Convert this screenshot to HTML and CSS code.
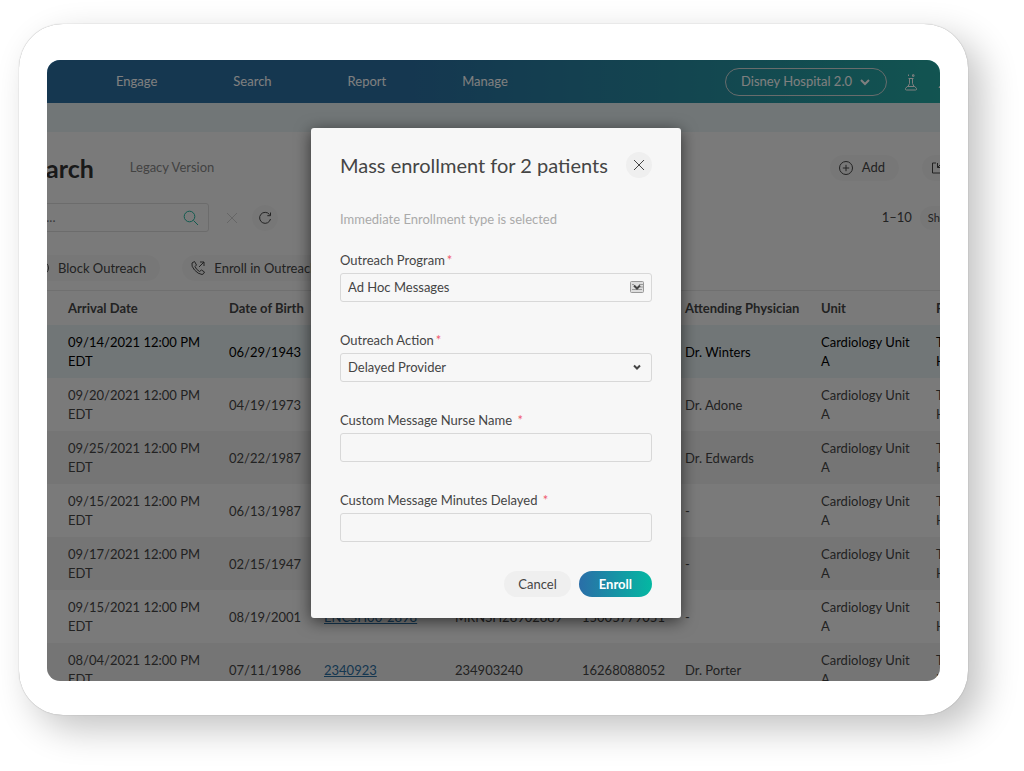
FILE: index.html
```html
<!DOCTYPE html>
<html lang="en">
<head>
    <meta charset="UTF-8">
    <meta name="viewport" content="width=device-width, initial-scale=1.0">
    <title>Patient search</title>
    <link rel="stylesheet" href="styles.css">
</head>
<body>
    <div class="tablet">
        <div class="screen">
            <div class="app">
                <header class="topbar">
                    <nav class="menu">
                        <a href="#">Engage</a>
                        <a href="#">Search</a>
                        <a href="#">Report</a>
                        <a href="#">Manage</a>
                    </nav>
                    <button class="hospital">Disney Hospital 2.0
                        <svg width="12" height="12" viewBox="0 0 12 12"><path d="M2 4l4 4 4-4"/></svg>
                    </button>
                    <button class="bar-icon" aria-label="Lab">
                        <svg width="14" height="18" viewBox="0 0 14 18"><path d="M4.500 5.500h5M5.500 5.500v5L4 13.500M8.500 5.500v5l1.500 3M3.200 13.500h7.600l1.700 2q.5 1.500-1 1.500H2.500q-1.500 0-1-1.500zM4.500 1.500v1.500M8.500 1.800h1.500v1.500H8.500z"/></svg>
                    </button>
                    <button class="bar-icon" aria-label="Alerts">
                        <svg width="18" height="18" viewBox="0 0 18 18"><path d="M1 14.500h16M1 14.500q2-1 2-5.500 0-6 6-6t6 6q0 4.500 2 5.500"/></svg>
                    </button>
                </header>
                <div class="band"></div>

                <div class="title-row">
                    <h1>Search</h1>
                    <a class="legacy" href="#">Legacy Version</a>
                    <button class="pill add">
                        <svg width="16" height="16" viewBox="0 0 16 16"><circle cx="8" cy="8" r="6.500"/><path d="M8 4.800v6.400M4.800 8h6.400"/></svg>
                        Add
                    </button>
                    <button class="pill export" aria-label="Export">
                        <svg width="16" height="16" viewBox="0 0 16 16"><path d="M6 3H2.500v10h10v-3M7.500 3v4.500h4M7.500 7.500l5-5"/></svg>
                    </button>
                </div>

                <div class="search-row">
                    <div class="search-box">
                        <input type="text" placeholder="Search patients by..." aria-label="Search patients">
                        <svg width="16" height="16" viewBox="0 0 16 16"><circle cx="6.500" cy="6.500" r="5.300"/><path d="M10.500 10.500l4.500 4.500"/></svg>
                    </div>
                    <button class="round clear" aria-label="Clear">
                        <svg width="12" height="12" viewBox="0 0 12 12"><path d="M1 1l10 10M11 1L1 11"/></svg>
                    </button>
                    <button class="round refresh" aria-label="Refresh">
                        <svg width="14" height="14" viewBox="0 0 14 14"><path d="M11.500 3.500A5.500 5.500 0 1 0 12.500 8M12.500 1.500v3.200H9.300"/></svg>
                    </button>
                    <span class="range">1–10</span>
                    <button class="show">Show 10</button>
                </div>

                <div class="action-row">
                    <button class="pill">
                        <svg width="16" height="16" viewBox="0 0 16 16"><circle cx="8" cy="8" r="6.500"/><path d="M3.500 3.500l9 9"/></svg>
                        Block Outreach
                    </button>
                    <button class="pill">
                        <svg width="16" height="16" viewBox="0 0 16 16"><path d="M4.500 1.500L2 3q-1 3 2.500 7t7.500 4.500q1.500 0 2.500-2.500l-3-2-2 1.500Q6 9.500 5 6.500l1.500-1.500zM9 7l5-5M10 2h4v4"/></svg>
                        Enroll in Outreach
                    </button>
                </div>

                <table class="patients">
                    <colgroup>
                        <col class="c-arrival"><col class="c-birth"><col class="c-visit"><col class="c-mrn"><col class="c-phone"><col class="c-doctor"><col class="c-unit"><col class="c-facility">
                    </colgroup>
                    <thead>
                        <tr><th>Arrival Date</th><th>Date of Birth</th><th>Visit</th><th>MRN</th><th>Phone</th><th>Attending Physician</th><th>Unit</th><th>Facility</th></tr>
                    </thead>
                    <tbody>
                        <tr class="selected"><td>09/14/2021 12:00 PM EDT</td><td>06/29/1943</td><td></td><td></td><td></td><td>Dr. Winters</td><td>Cardiology Unit A</td><td>The Hospital</td></tr>
                        <tr><td>09/20/2021 12:00 PM EDT</td><td>04/19/1973</td><td></td><td></td><td></td><td>Dr. Adone</td><td>Cardiology Unit A</td><td>The Hospital</td></tr>
                        <tr><td>09/25/2021 12:00 PM EDT</td><td>02/22/1987</td><td></td><td></td><td></td><td>Dr. Edwards</td><td>Cardiology Unit A</td><td>The Hospital</td></tr>
                        <tr><td>09/15/2021 12:00 PM EDT</td><td>06/13/1987</td><td></td><td></td><td></td><td>-</td><td>Cardiology Unit A</td><td>The Hospital</td></tr>
                        <tr><td>09/17/2021 12:00 PM EDT</td><td>02/15/1947</td><td></td><td></td><td></td><td>-</td><td>Cardiology Unit A</td><td>The Hospital</td></tr>
                        <tr><td>09/15/2021 12:00 PM EDT</td><td>08/19/2001</td><td><a href="#">ENCSH00-2898</a></td><td>MRNSH28902889</td><td>15005779051</td><td>-</td><td>Cardiology Unit A</td><td>The Hospital</td></tr>
                        <tr><td>08/04/2021 12:00 PM EDT</td><td>07/11/1986</td><td><a href="#">2340923</a></td><td>234903240</td><td>16268088052</td><td>Dr. Porter</td><td>Cardiology Unit A</td><td>The Hospital</td></tr>
                    </tbody>
                </table>
            </div>

            <div class="overlay">
                <form class="modal">
                    <div class="modal-head">
                        <h2>Mass enrollment for 2 patients</h2>
                        <button type="button" class="close" aria-label="Close">
                            <svg width="12" height="12" viewBox="0 0 12 12"><path d="M1 1l10 10M11 1L1 11"/></svg>
                        </button>
                    </div>
                    <p class="note">Immediate Enrollment type is selected</p>

                    <div class="field">
                        <label for="program">Outreach Program<span class="req">*</span></label>
                        <div class="select">
                            <select id="program"><option>Ad Hoc Messages</option></select>
                            <svg class="autofill" width="16" height="14" viewBox="0 0 16 14"><rect x="1.500" y="1.500" width="13" height="11" rx="1"/><path class="lines" d="M3 4.500h2M10 4.500h4M11 7h3M3 9.500h10"/><path class="arrow" d="M5 5.500l3 3 3-3"/></svg>
                        </div>
                    </div>
                    <div class="field">
                        <label for="action">Outreach Action<span class="req">*</span></label>
                        <div class="select">
                            <select id="action"><option>Delayed Provider</option></select>
                            <svg width="16" height="14" viewBox="0 0 16 14"><path class="arrow" d="M5 5.500l3 3 3-3"/></svg>
                        </div>
                    </div>
                    <div class="field">
                        <label for="nurse">Custom Message Nurse Name <span class="req">*</span></label>
                        <input type="text" id="nurse">
                    </div>
                    <div class="field">
                        <label for="minutes">Custom Message Minutes Delayed <span class="req">*</span></label>
                        <input type="text" id="minutes">
                    </div>

                    <div class="modal-foot">
                        <button type="button" class="cancel">Cancel</button>
                        <button type="button" class="enroll">Enroll</button>
                    </div>
                </form>
            </div>
        </div>
    </div>
</body>
</html>
```
FILE: styles.css
```css
* {
    box-sizing: border-box;
}

body {
    margin: 0;
    height: 100vh;
    padding: 24px 56px 56px 19px;
    background-color: #ffffff;
    color: #454545;
    font-family: Lato, sans-serif;
    font-size: 13px;
    line-height: 19px;
}

button,
input,
select {
    font: inherit;
    color: inherit;
}

button {
    border: none;
    background: none;
    padding: 0;
    cursor: pointer;
}

svg {
    display: block;
    flex: none;
    fill: none;
    stroke: currentColor;
    stroke-width: 1;
}

.tablet {
    height: 100%;
    padding: 36px 28px 34px;
    border-radius: 44px;
    background-color: #ffffff;
    box-shadow: 0 0 1px rgba(0, 0, 0, 0.4), 14px 14px 36px rgba(0, 0, 0, 0.24);
}

.screen {
    position: relative;
    height: 100%;
    overflow: hidden;
    border-radius: 13px;
    background-color: #f5f5f5;
}

/* top bar */
.topbar {
    display: flex;
    align-items: center;
    height: 43px;
    padding-left: 69px;
    background: linear-gradient(to right, #2a6ea0 40%, #24a8a2);
    color: #ffffff;
}

.menu {
    display: flex;
    flex: 1;
    gap: 76px;
}

.menu a {
    color: inherit;
    text-decoration: none;
}

.hospital {
    display: flex;
    align-items: center;
    gap: 7px;
    height: 28px;
    padding: 0 15px;
    border: 1px solid #d0d8d8;
    border-radius: 14px;
}

.hospital svg {
    stroke-width: 2;
}

.bar-icon {
    margin-left: 17px;
}

.bar-icon:last-child {
    margin: 0 -16px 0 20px;
}

.band {
    height: 29px;
    background-color: #e3edef;
}

/* page tools */
.title-row,
.search-row,
.action-row {
    display: flex;
    align-items: center;
}

.title-row {
    height: 71px;
    margin: 0 -26px 0 -28px;
}

h1 {
    margin: 0;
    font-size: 25px;
    line-height: 30px;
    color: #333333;
}

.legacy {
    flex: 1;
    margin-left: 36px;
    color: #858585;
    text-decoration: none;
}

.pill {
    display: flex;
    align-items: center;
    gap: 8px;
    height: 26px;
    padding: 0 14px 0 8px;
    border-radius: 13px;
    background-color: #efefef;
}

.export {
    margin-left: 23px;
    padding: 0 20px 0 8px;
}

.search-row {
    height: 29px;
    margin-right: -38px;
}

.search-box {
    display: flex;
    align-items: center;
    width: 282px;
    height: 29px;
    margin-left: -120px;
    padding: 0 9px 0 12px;
    border: 1px solid #d8d8d8;
    border-radius: 3px;
    color: #24b59f;
}

.search-box input {
    flex: 1;
    min-width: 0;
    border: none;
    background: none;
}

.round {
    display: flex;
    align-items: center;
    justify-content: center;
    width: 26px;
    height: 26px;
    border-radius: 50%;
    background-color: #efefef;
}

.clear {
    margin: 0 7px 0 10px;
    background: none;
    color: #cccccc;
}

.range {
    margin-left: auto;
}

.show {
    height: 24px;
    margin-left: 8px;
    padding: 0 8px;
    border-radius: 12px;
    background-color: #efefef;
    font-size: 11px;
}

.action-row {
    gap: 22px;
    height: 58px;
    padding-top: 14px;
    margin-left: -21px;
}

/* patients table */
.patients {
    width: 100%;
    min-width: 960px;
    table-layout: fixed;
    border-collapse: collapse;
    border-top: 1px solid #e0e0e0;
}

.c-arrival { width: 182px; }
.c-birth { width: 95px; }
.c-visit { width: 131px; }
.c-mrn { width: 127px; }
.c-phone { width: 103px; }
.c-doctor { width: 136px; }
.c-unit { width: 115px; }

.patients th,
.patients td {
    padding: 8px 20px 7px 0;
    text-align: left;
}

.patients th:first-child,
.patients td:first-child {
    padding-left: 21px;
}

.patients th {
    white-space: nowrap;
}

.patients tbody tr:nth-child(odd) {
    background-color: #ebebeb;
}

.patients tbody tr.selected {
    background-color: #e3edef;
    color: #000000;
}

.patients a {
    color: #2a6ea0;
}

/* enrollment dialog */
.overlay {
    position: absolute;
    inset: 0;
    display: flex;
    align-items: flex-start;
    justify-content: center;
    padding: 68px 0 0 5px;
    background-color: rgba(0, 0, 0, 0.5);
}

.modal {
    width: 370px;
    padding: 24px 29px 21px;
    border-radius: 3px;
    background-color: #f7f7f7;
    box-shadow: 0 3px 16px rgba(0, 0, 0, 0.6);
}

.modal-head {
    display: flex;
    align-items: center;
    justify-content: space-between;
}

h2 {
    margin: 0;
    font-size: 20px;
    font-weight: normal;
    line-height: 26px;
}

.close {
    display: flex;
    align-items: center;
    justify-content: center;
    width: 26px;
    height: 26px;
    border-radius: 50%;
    background-color: #efefef;
}

.note {
    margin: 32px 0 22px;
    color: #aaaaaa;
}

.field {
    margin-bottom: 29px;
}

.field label {
    display: block;
    margin-bottom: 3px;
}

.req {
    margin-left: 2px;
    color: #ef5b6e;
}

.field input,
.field select {
    display: block;
    width: 100%;
    height: 29px;
    padding: 0 7px;
    border: 1px solid #d8d8d8;
    border-radius: 3px;
    background-color: #f7f7f7;
    appearance: none;
}

.select {
    position: relative;
}

.select svg {
    position: absolute;
    top: 7px;
    right: 7px;
    pointer-events: none;
}

.arrow {
    stroke-width: 2;
}

.autofill rect {
    fill: #dddddd;
    stroke: #999999;
}

.autofill .lines {
    stroke: #999999;
}

.modal-foot {
    display: flex;
    justify-content: flex-end;
    gap: 8px;
}

.modal-foot button {
    height: 26px;
    border-radius: 13px;
}

.cancel {
    padding: 0 14px;
    background-color: #efefef;
}

.modal-foot .enroll {
    padding: 0 20px;
    background: linear-gradient(to right, #2a6ea8, #04b8a2);
    color: #ffffff;
    font-weight: bold;
}
```
